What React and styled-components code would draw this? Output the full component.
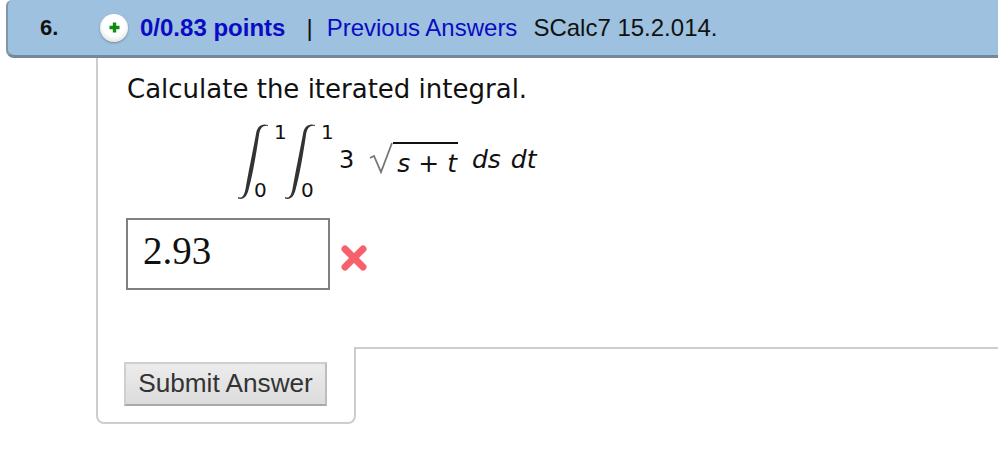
import React from "react";
import styled, { createGlobalStyle } from "styled-components";

const GlobalStyle = createGlobalStyle`
	html, body {
		margin: 0;
		padding: 0;
		background: #fff;
	}
	body {
		width: 998px;
		height: 454px;
		overflow: hidden;
		font-family: "Liberation Sans", Arial, sans-serif;
	}
`;

const Page = styled.div`
	width: 998px;
	height: 454px;
	overflow: hidden;
`;

const Header = styled.header`
	box-sizing: border-box;
	height: 58px;
	margin-left: 6px;
	padding: 0 0 0 32px;
	display: flex;
	align-items: center;
	background: #9dc1de;
	border-left: 2px solid #7f96a8;
	border-bottom: 3px solid #73889a;
	border-radius: 6px 0 0 8px;
	font-size: 24px;
	color: #111;
`;

const Number = styled.span`
	width: 60px;
	font-weight: 700;
	font-size: 22px;
`;

const PlusBadge = styled.span`
	box-sizing: border-box;
	width: 28px;
	height: 28px;
	margin-right: 12px;
	display: flex;
	align-items: center;
	justify-content: center;
	border-radius: 50%;
	background: radial-gradient(circle at 50% 40%, #ffffff 50%, #cfcfca 100%);
	box-shadow: 0 1px 2px rgba(70, 80, 90, 0.5);
`;

const Points = styled.span`
	font-weight: 700;
	color: #0b0bc4;
`;

const Divider = styled.span`
	margin: 0 14px 0 21px;
`;

const BlueText = styled.span`
	color: #0b0bc4;
	margin-right: 16px;
`;

const Panel = styled.div`
	margin-left: 96px;
	display: flex;
	flex-direction: column;
`;

const Content = styled.section`
	box-sizing: border-box;
	height: 289px;
	padding: 13px 0 0 29px;
	border-left: 2px solid #cdcdcd;
	font-family: "DejaVu Sans", Verdana, sans-serif;
	color: #111;
`;

const Prompt = styled.p`
	margin: 0;
	font-size: 26px;
	line-height: 36px;
`;

const Formula = styled.div`
	height: 96px;
	margin: 15px 0 0 111px;
	display: flex;
	align-items: flex-start;
	font-size: 25px;
`;

const IntegralGroup = styled.div`
	width: 47px;
	height: 76px;
	display: flex;
	position: relative;
`;

const Limit = styled.span`
	position: absolute;
	font-size: 20px;
	line-height: 20px;
	top: ${props => (props.$upper ? "0" : "58px")};
	left: ${props => (props.$upper ? "36px" : "16px")};
`;

const Coefficient = styled.span`
	margin: 24px 0 0 7px;
	line-height: 28px;
	font-size: 24px;
`;

const Root = styled.div`
	margin: 9px 0 0 15px;
	display: flex;
`;

const Radicand = styled.span`
	margin-top: 11px;
	padding: 5px 1px 0 4px;
	height: 28px;
	line-height: 29px;
	border-top: 2px solid #111;
	font-style: italic;
	white-space: pre;
`;

const Differential = styled.span`
	margin: 24px 0 0 14px;
	line-height: 28px;
	font-style: italic;
	word-spacing: 2px;
`;

const AnswerRow = styled.div`
	margin-left: -1px;
	display: flex;
	align-items: center;
`;

const AnswerBox = styled.div`
	box-sizing: border-box;
	width: 204px;
	height: 72px;
	padding: 0 0 8px 15px;
	display: flex;
	align-items: center;
	border: 2px solid #808080;
	font-family: "Liberation Serif", "Times New Roman", serif;
	font-size: 39px;
	color: #111;
`;

const WrongMark = styled.svg`
	margin: 8px 0 0 10px;
`;

const Footer = styled.div`
	display: flex;
	align-items: flex-start;
`;

const SubmitArea = styled.div`
	box-sizing: border-box;
	width: 260px;
	height: 77px;
	padding: 15px 0 0 26px;
	border: 2px solid #cdcdcd;
	border-top: none;
	border-radius: 0 0 8px 8px;
`;

const SubmitButton = styled.button`
	box-sizing: border-box;
	width: 203px;
	height: 44px;
	padding: 0 0 2px;
	border: 2px solid;
	border-color: #cfcfcf #bdbdbd #a9a9a9 #cfcfcf;
	border-radius: 0;
	background: linear-gradient(#ececec, #dcdcdc);
	font-family: "Liberation Sans", Arial, sans-serif;
	font-size: 26.2px;
	color: #333;
`;

const TopRule = styled.div`
	flex: 1;
	border-top: 2px solid #cdcdcd;
`;

const IntegralSign = () => (
	<svg width="32" height="78" viewBox="0 0 32 78">
		<path
			d="M0 75 C4 77 6 74 7.5 67 C10.5 50 15 28 18 12 C19 5 23 1 30 3 L30 4 C25 3 22 6 21 13 C18.5 30 14.5 54 10.5 68 C8.5 76 4 78 0 76.5 Z"
			fill="#333"
		/>
	</svg>
);

const Radical = () => (
	<svg width="24" height="44" viewBox="0 0 24 44">
		<path d="M1 27 L5 25 L12 41 L23 12" fill="none" stroke="#777" strokeWidth="1.8" />
	</svg>
);

const App = () => {
	return (
		<Page>
			<GlobalStyle />
			<Header>
				<Number>6.</Number>
				<PlusBadge>
					<svg width="13" height="13" viewBox="0 0 13 13">
						<path d="M6.5 1.5 V11.5 M1.5 6.5 H11.5" stroke="#128a12" strokeWidth="3.4" />
					</svg>
				</PlusBadge>
				<Points>0/0.83 points</Points>
				<Divider>|</Divider>
				<BlueText>Previous Answers</BlueText>
				<span>SCalc7 15.2.014.</span>
			</Header>
			<Panel>
				<Content>
					<Prompt>Calculate the iterated integral.</Prompt>
					<Formula>
						<IntegralGroup>
							<IntegralSign />
							<Limit $upper>1</Limit>
							<Limit>0</Limit>
						</IntegralGroup>
						<IntegralGroup>
							<IntegralSign />
							<Limit $upper>1</Limit>
							<Limit>0</Limit>
						</IntegralGroup>
						<Coefficient>3</Coefficient>
						<Root>
							<Radical />
							<Radicand>s + t</Radicand>
						</Root>
						<Differential>ds dt</Differential>
					</Formula>
					<AnswerRow>
						<AnswerBox>2.93</AnswerBox>
						<WrongMark width="28" height="28" viewBox="0 0 28 28">
							<path d="M5 5 L23 23 M23 5 L5 23" stroke="#f8606c" strokeWidth="7" strokeLinecap="round" />
						</WrongMark>
					</AnswerRow>
				</Content>
				<Footer>
					<SubmitArea>
						<SubmitButton>Submit Answer</SubmitButton>
					</SubmitArea>
					<TopRule />
				</Footer>
			</Panel>
		</Page>
	);
};

export default App;
